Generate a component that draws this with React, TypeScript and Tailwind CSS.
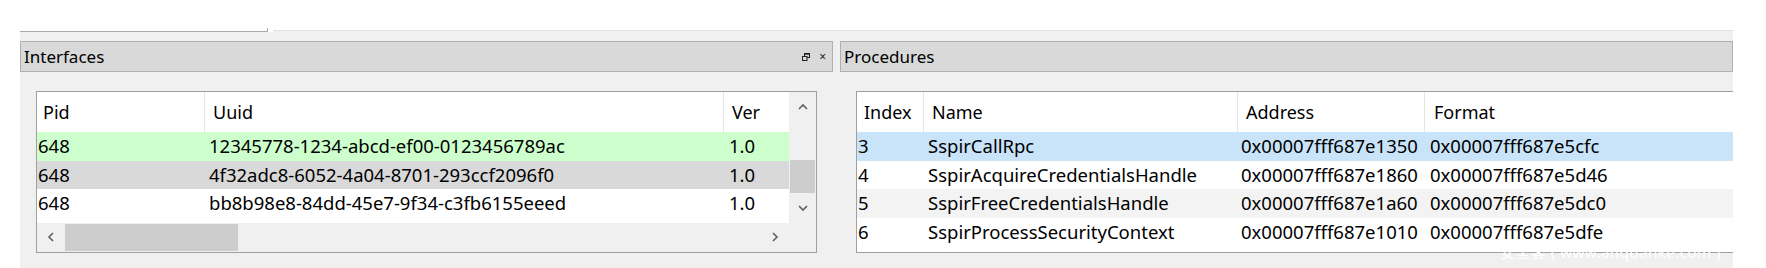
import React from "react";

const font = { fontFamily: '"Noto Sans", "Open Sans", sans-serif' };

type Col = { title: string; w: string; head: string; cell: string; sep?: boolean };

function Chevron({ dir }: { dir: "up" | "down" | "left" | "right" }) {
  const pts: Record<string, string> = {
    up: "1,6 5,2 9,6",
    down: "1,2 5,6 9,2",
    left: "6,1 2,5 6,9",
    right: "2,1 6,5 2,9",
  };
  const vertical = dir === "up" || dir === "down";
  return (
    <svg
      width={vertical ? 10 : 8}
      height={vertical ? 8 : 10}
      viewBox={vertical ? "0 0 10 8" : "0 0 8 10"}
      fill="none"
      stroke="#606060"
      strokeWidth="1.6"
    >
      <polyline points={pts[dir]} />
    </svg>
  );
}

function PanelHeader({ title, tools }: { title: string; tools?: boolean }) {
  return (
    <div className="h-[31px] shrink-0 flex items-center border border-[#b0b0b0] bg-[#d9d9d9] pl-[3px] pr-[6px]">
      <span className="text-[17px] leading-none text-black">{title}</span>
      {tools && (
        <div className="ml-auto flex items-center gap-[9px]">
          {/* float / restore */}
          <svg width="8" height="8" viewBox="0 0 8 8" fill="none" stroke="#222" strokeWidth="1">
            <rect x="2.5" y="0.5" width="5" height="4" />
            <line x1="2.5" y1="1.2" x2="7.5" y2="1.2" />
            <rect x="0.5" y="3.5" width="4.5" height="4" fill="#d9d9d9" />
          </svg>
          <span className="text-[12px] leading-none text-[#222]">×</span>
        </div>
      )}
    </div>
  );
}

const ifaceCols: Col[] = [
  { title: "Pid", w: "w-[167px]", head: "pl-[6px]", cell: "pl-[1px]" },
  { title: "Uuid", w: "w-[519px]", head: "pl-[8px]", cell: "pl-[4px]", sep: true },
  { title: "Ver", w: "w-[66px]", head: "pl-[8px]", cell: "pl-[4px]", sep: true },
];

const ifaceRows = [
  { bg: "bg-[#ccffcc]", cells: ["648", "12345778-1234-abcd-ef00-0123456789ac", "1.0"] },
  { bg: "bg-[#d9d9d9]", cells: ["648", "4f32adc8-6052-4a04-8701-293ccf2096f0", "1.0"] },
  { bg: "bg-white", cells: ["648", "bb8b98e8-84dd-45e7-9f34-c3fb6155eeed", "1.0"] },
];

const procCols: Col[] = [
  { title: "Index", w: "w-[66px]", head: "pl-[7px]", cell: "pl-[1px]" },
  { title: "Name", w: "w-[314px]", head: "pl-[8px]", cell: "pl-[4px]", sep: true },
  { title: "Address", w: "w-[187px]", head: "pl-[8px]", cell: "pl-[2px]", sep: true },
  { title: "Format", w: "flex-1", head: "pl-[9px]", cell: "pl-[3px]", sep: true },
];

const procRows = [
  { bg: "bg-[#c9e3f8]", cells: ["3", "SspirCallRpc", "0x00007fff687e1350", "0x00007fff687e5cfc"] },
  { bg: "bg-white", cells: ["4", "SspirAcquireCredentialsHandle", "0x00007fff687e1860", "0x00007fff687e5d46"] },
  { bg: "bg-[#f3f3f3]", cells: ["5", "SspirFreeCredentialsHandle", "0x00007fff687e1a60", "0x00007fff687e5dc0"] },
  { bg: "bg-white", cells: ["6", "SspirProcessSecurityContext", "0x00007fff687e1010", "0x00007fff687e5dfe"] },
];

function HeaderRow({ cols }: { cols: Col[] }) {
  return (
    <div className="h-[40px] flex bg-white">
      {cols.map((c) => (
        <div
          key={c.title}
          className={`${c.w} ${c.head} shrink-0 flex items-center whitespace-nowrap ${c.sep ? "border-l border-[#e5e5e5]" : ""}`}
        >
          {c.title}
        </div>
      ))}
    </div>
  );
}

function DataRows({ cols, rows }: { cols: Col[]; rows: { bg: string; cells: string[] }[] }) {
  return (
    <>
      {rows.map((r, i) => (
        <div key={i} className={`h-[28.5px] flex text-[18.5px] ${r.bg}`}>
          {r.cells.map((v, j) => (
            <div
              key={j}
              className={`${cols[j].w} ${cols[j].cell} ${j > 0 ? "ml-px" : ""} shrink-0 flex items-center whitespace-nowrap overflow-hidden`}
            >
              {v}
            </div>
          ))}
        </div>
      ))}
    </>
  );
}

export default function App() {
  return (
    <div className="w-[1766px] h-[268px] bg-white overflow-hidden text-black text-[18px]" style={font}>
      <div className="ml-[20px] w-[1713px] h-full flex flex-col">
        {/* top strip */}
        <div className="h-[41px] flex shrink-0">
          <div className="w-[248px] flex flex-col">
            <div className="h-[28px]" />
            <div className="h-[4px] border-b border-r border-[#a8a8a8]" />
            <div className="flex-1 bg-[#f0f0f0]" />
          </div>
          <div className="w-[5px] flex flex-col">
            <div className="h-[32px]" />
            <div className="flex-1 bg-[#f0f0f0]" />
          </div>
          <div className="flex-1 flex flex-col">
            <div className="h-[30px]" />
            <div className="flex-1 bg-[#f0f0f0] border-t border-[#e2e2e2]" />
          </div>
        </div>

        <div className="flex-1 flex gap-[7px] bg-[#f0f0f0]">
          {/* Interfaces */}
          <div className="w-[813px] flex flex-col">
            <PanelHeader title="Interfaces" tools />
            <div className="pt-[19px] px-[16px]">
              <div className="border border-[#a0a0a0] bg-white flex flex-col">
                <div className="flex">
                  <div className="w-[752px] flex flex-col">
                    <HeaderRow cols={ifaceCols} />
                    <DataRows cols={ifaceCols} rows={ifaceRows} />
                    <div className="h-[5.5px]" />
                  </div>
                  {/* vertical scrollbar */}
                  <div className="w-[27px] bg-[#f0f0f0] flex flex-col">
                    <div className="h-[29px] flex items-center justify-center">
                      <Chevron dir="up" />
                    </div>
                    <div className="h-[39px]" />
                    <div className="h-[33px] mx-[1px] bg-[#cdcdcd]" />
                    <div className="flex-1 flex items-center justify-center">
                      <Chevron dir="down" />
                    </div>
                  </div>
                </div>
                {/* horizontal scrollbar */}
                <div className="h-[28.5px] flex bg-[#f0f0f0]">
                  <div className="w-[28px] flex items-center justify-center">
                    <Chevron dir="left" />
                  </div>
                  <div className="w-[173px] my-[1px] bg-[#cdcdcd]" />
                  <div className="w-[523px]" />
                  <div className="w-[28px] flex items-center justify-center">
                    <Chevron dir="right" />
                  </div>
                  <div className="w-[27px]" />
                </div>
              </div>
            </div>
          </div>

          {/* Procedures */}
          <div className="flex-1 flex flex-col relative">
            <PanelHeader title="Procedures" />
            <div className="pt-[19px] pl-[16px]">
              <div className="border border-r-0 border-[#a0a0a0] bg-white flex flex-col h-[161.5px]">
                <HeaderRow cols={procCols} />
                <DataRows cols={procCols} rows={procRows} />
              </div>
            </div>
            <span
              className="absolute right-[12px] top-[204px] text-[15px] leading-none text-white tracking-[0.5px]"
              style={{ fontFamily: '"Noto Sans", "Noto Sans CJK SC", sans-serif' }}
            >
              安全客 ( www.anquanke.com )
            </span>
          </div>
        </div>
      </div>
    </div>
  );
}
